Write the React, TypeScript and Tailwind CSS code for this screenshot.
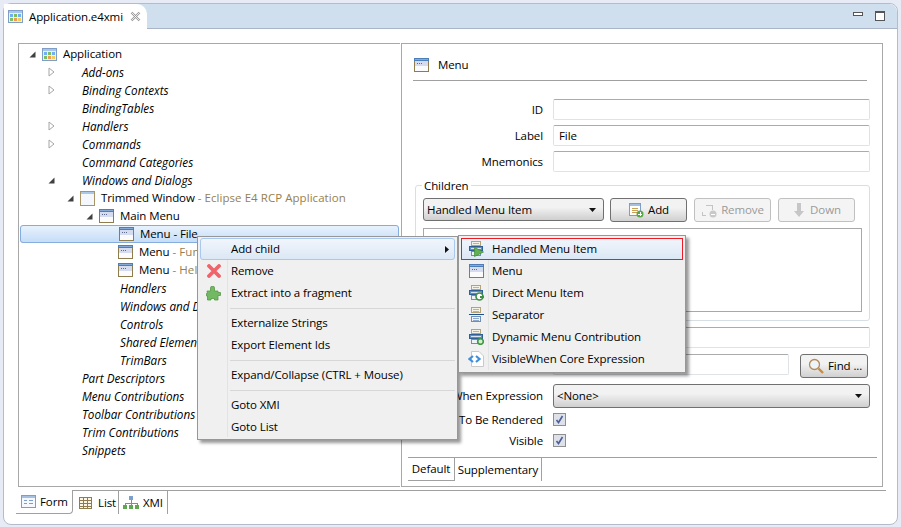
import type { ReactNode } from 'react';

const FONT = "font-['Open_Sans','Liberation_Sans',sans-serif]";

function MenuIcon() {
  return (
    <svg width="15" height="14" viewBox="0 0 15 14" shapeRendering="crispEdges" className="shrink-0">
      <rect x="0" y="0" width="15" height="14" fill="#8f7c4c" />
      <rect x="0" y="0" width="15" height="3" fill="#4f7db8" />
      <rect x="1" y="1" width="13" height="1" fill="#86aad8" />
      <rect x="1" y="3" width="13" height="5" fill="#d5dcf0" />
      <rect x="3" y="5" width="1" height="1" fill="#5c6a8c" />
      <rect x="5" y="5" width="1" height="1" fill="#5c6a8c" />
      <rect x="7" y="5" width="1" height="1" fill="#5c6a8c" />
      <rect x="1" y="8" width="13" height="5" fill="#fbfbfd" />
    </svg>
  );
}

function WindowIcon() {
  return (
    <svg width="15" height="15" viewBox="0 0 15 15" shapeRendering="crispEdges" className="shrink-0">
      <rect x="0" y="0" width="15" height="15" fill="#a99468" />
      <rect x="1" y="1" width="13" height="2" fill="#a9c9e8" />
      <rect x="1" y="3" width="13" height="11" fill="#f4f8fc" />
    </svg>
  );
}

function AppIcon() {
  return (
    <svg width="15" height="13" viewBox="0 0 15 13" shapeRendering="crispEdges" className="shrink-0">
      <rect x="0" y="0" width="15" height="13" fill="#7f9dc6" />
      <rect x="1" y="1" width="13" height="11" fill="#e8f0fa" />
      <rect x="1" y="1" width="13" height="2" fill="#a9c6ea" />
      <rect x="2" y="4" width="3" height="3" fill="#6fb1f0" />
      <rect x="6" y="4" width="3" height="3" fill="#7dbb64" />
      <rect x="10" y="4" width="3" height="3" fill="#6fb1f0" />
      <rect x="2" y="8" width="3" height="3" fill="#7dbb64" />
      <rect x="6" y="8" width="3" height="3" fill="#ee9c55" />
      <rect x="10" y="8" width="3" height="3" fill="#f0cd5e" />
    </svg>
  );
}

function ItemBase({ children }: { children?: ReactNode }) {
  return (
    <svg width="15" height="16" viewBox="0 0 15 16" shapeRendering="crispEdges" className="shrink-0">
      <rect x="2.5" y="0.5" width="9" height="4" fill="#f4f2e6" stroke="#b3a477" />
      <rect x="4" y="2" width="6" height="1" fill="#a8b6c8" />
      <rect x="0.5" y="5.5" width="13" height="4" fill="#5e8fc4" stroke="#2f5f96" />
      <rect x="2" y="7" width="10" height="1" fill="#d7e4f2" />
      <rect x="2.5" y="10.5" width="9" height="4" fill="#eef3fa" stroke="#6e8fb8" />
      {children}
    </svg>
  );
}

function HandledIcon() {
  return (
    <ItemBase>
      <path d="M5.5 6.5 L14.5 11 L5.5 15.5 Z" fill="#63b04f" stroke="#3f8b37" strokeWidth="0.7" shapeRendering="auto" />
    </ItemBase>
  );
}

function DirectIcon() {
  return (
    <ItemBase>
      <circle cx="10.5" cy="11.5" r="3.5" fill="#fff" stroke="#3f8f46" strokeWidth="1.7" shapeRendering="auto" />
      <rect x="10.5" y="10.5" width="4" height="2" fill="#3f8f46" />
    </ItemBase>
  );
}

function DynamicIcon() {
  return (
    <ItemBase>
      <circle cx="11.5" cy="12.5" r="2.8" fill="#d5edc9" stroke="#3f9a46" strokeWidth="1.6" shapeRendering="auto" />
    </ItemBase>
  );
}

function SeparatorIcon() {
  return (
    <svg width="15" height="16" viewBox="0 0 15 16" shapeRendering="crispEdges" className="shrink-0">
      <rect x="2.5" y="0.5" width="9" height="5" fill="#f4f2e6" stroke="#b3a477" />
      <rect x="4" y="2" width="6" height="1" fill="#a8b6c8" />
      <rect x="4" y="4" width="6" height="1" fill="#a8b6c8" />
      <rect x="0" y="7" width="15" height="1" fill="#1f4f8c" />
      <rect x="2.5" y="9.5" width="9" height="5" fill="#eef3fa" stroke="#6e8fb8" />
      <rect x="4" y="11" width="6" height="1" fill="#8fa8c8" />
      <rect x="4" y="13" width="6" height="1" fill="#8fa8c8" />
    </svg>
  );
}

function ExpressionIcon() {
  return (
    <svg width="16" height="16" viewBox="0 0 16 16" className="shrink-0">
      <path d="M3.5 .5 H11 L15.5 5 V15.5 H3.5 Z" fill="#fff" stroke="#c9c9c9" />
      <path d="M5 5 L1.5 8 L5 11" fill="none" stroke="#3f8fdc" strokeWidth="2.2" />
      <path d="M8 5 L11.5 8 L8 11" fill="none" stroke="#3f8fdc" strokeWidth="2.2" />
    </svg>
  );
}

function RemoveIcon() {
  return (
    <svg width="14" height="14" viewBox="0 0 14 14" className="shrink-0">
      <path d="M2 2 L12 12 M12 2 L2 12" stroke="#f0636b" strokeWidth="3.8" strokeLinecap="round" />
    </svg>
  );
}

function PuzzleIcon() {
  return (
    <svg width="15" height="15" viewBox="0 0 15 15" className="shrink-0">
      <path
        d="M1 5 H4.5 V2 A1.8 1.8 0 0 1 8.5 2 V5 H12 V6.5 H14.5 V9.5 H12 V14 H8.5 V12.5 H5 V14 H1.5 V10 H0.5 V7.5 H1.5 Z"
        fill="#73b863"
        stroke="#559a48"
        strokeWidth="0.8"
      />
    </svg>
  );
}

function Arrow({ kind }: { kind?: 'open' | 'closed' }) {
  if (kind === 'open')
    return (
      <svg width="7" height="7" viewBox="0 0 7 7" className="shrink-0">
        <path d="M6.5 .5 V6.5 H.5 Z" fill="#404040" />
      </svg>
    );
  if (kind === 'closed')
    return (
      <svg width="7" height="10" viewBox="0 0 7 10" className="shrink-0">
        <path d="M1 1 L6 5 L1 9 Z" fill="#fff" stroke="#a6a6a6" />
      </svg>
    );
  return null;
}

type TreeRow = {
  label: string;
  suffix?: string;
  indent: string;
  arrow?: 'open' | 'closed';
  icon?: ReactNode;
  italic?: boolean;
  selected?: boolean;
};

const tree: TreeRow[] = [
  { label: 'Application', indent: 'pl-[10px]', arrow: 'open', icon: <AppIcon /> },
  { label: 'Add-ons', indent: 'pl-[29px]', arrow: 'closed', italic: true },
  { label: 'Binding Contexts', indent: 'pl-[29px]', arrow: 'closed', italic: true },
  { label: 'BindingTables', indent: 'pl-[29px]', italic: true },
  { label: 'Handlers', indent: 'pl-[29px]', arrow: 'closed', italic: true },
  { label: 'Commands', indent: 'pl-[29px]', arrow: 'closed', italic: true },
  { label: 'Command Categories', indent: 'pl-[29px]', italic: true },
  { label: 'Windows and Dialogs', indent: 'pl-[29px]', arrow: 'open', italic: true },
  { label: 'Trimmed Window', suffix: ' - Eclipse E4 RCP Application', indent: 'pl-[48px]', arrow: 'open', icon: <WindowIcon /> },
  { label: 'Main Menu', indent: 'pl-[67px]', arrow: 'open', icon: <MenuIcon /> },
  { label: 'Menu - File', indent: 'pl-[86px]', icon: <MenuIcon />, selected: true },
  { label: 'Menu', suffix: ' - Functions', indent: 'pl-[86px]', icon: <MenuIcon /> },
  { label: 'Menu', suffix: ' - Help', indent: 'pl-[86px]', icon: <MenuIcon /> },
  { label: 'Handlers', indent: 'pl-[67px]', italic: true },
  { label: 'Windows and Dialogs', indent: 'pl-[67px]', italic: true },
  { label: 'Controls', indent: 'pl-[67px]', italic: true },
  { label: 'Shared Elements', indent: 'pl-[67px]', italic: true },
  { label: 'TrimBars', indent: 'pl-[67px]', italic: true },
  { label: 'Part Descriptors', indent: 'pl-[29px]', italic: true },
  { label: 'Menu Contributions', indent: 'pl-[29px]', italic: true },
  { label: 'Toolbar Contributions', indent: 'pl-[29px]', italic: true },
  { label: 'Trim Contributions', indent: 'pl-[29px]', italic: true },
  { label: 'Snippets', indent: 'pl-[29px]', italic: true },
];

function Row({ row }: { row: TreeRow }) {
  return (
    <div
      className={`flex h-[18px] items-center whitespace-nowrap ${row.indent} ${
        row.selected ? 'mx-px rounded-[3px] outline outline-1 -outline-offset-1 outline-[#84acdd] bg-gradient-to-b from-[#eaf3fd] to-[#c3dcf7]' : ''
      }`}
    >
      <span className="flex w-[13px] shrink-0 items-center">
        <Arrow kind={row.arrow} />
      </span>
      <span className="flex w-[14px] shrink-0 items-center">{row.icon}</span>
      <span className={`ml-[7px] ${row.italic ? 'text-[11.7px] italic tracking-normal' : ''}`}>
        {row.label}
        {row.suffix && <span className="tracking-[0.05px] text-[#957f50]">{row.suffix}</span>}
      </span>
    </div>
  );
}

function TextField({ value, className = 'flex-1' }: { value?: string; className?: string }) {
  return (
    <div className={`flex h-[21px] items-center rounded-[2px] border border-[#dfe3e8] border-t-[#ababab] pl-[5px] ${className}`}>
      {value}
    </div>
  );
}

function Combo({ value, className }: { value: string; className: string }) {
  return (
    <div className={`flex items-center justify-between rounded-[3px] border border-[#707070] bg-gradient-to-b from-[#f2f2f2] from-40% to-[#cfcfcf] pl-[3px] pr-[7px] ${className}`}>
      <span>{value}</span>
      <svg width="7" height="4" viewBox="0 0 7 4">
        <path d="M0 0 H7 L3.5 4 Z" fill="#111" />
      </svg>
    </div>
  );
}

function ToolButton({ label, icon, disabled, className }: { label: string; icon: ReactNode; disabled?: boolean; className: string }) {
  return (
    <div
      className={`flex h-[24px] items-center justify-center gap-[4px] rounded-[3px] border ${
        disabled
          ? 'border-[#c0c0c0] bg-[#f4f4f4] text-[#9a9a9a]'
          : 'border-[#707070] bg-gradient-to-b from-[#f2f2f2] from-40% to-[#d0d0d0]'
      } ${className}`}
    >
      {icon}
      {label}
    </div>
  );
}

function CheckRow({ label }: { label: string }) {
  return (
    <div className="flex h-[21px] items-center">
      <span className="w-[141px] pr-0 text-right">{label}</span>
      <span className="ml-[10px] flex size-[13px] items-center justify-center border border-[#8e8f8f] bg-[#dee1ea]">
        <svg width="9" height="9" viewBox="0 0 9 9">
          <path d="M1.5 5 L3.5 7.5 L7.5 1" fill="none" stroke="#4a5f97" strokeWidth="1.6" />
        </svg>
      </span>
    </div>
  );
}

type MenuEntry = { label?: string; icon?: ReactNode; hot?: boolean; sub?: boolean };

const contextMenu: MenuEntry[] = [
  { label: 'Add child', hot: true, sub: true },
  { label: 'Remove', icon: <RemoveIcon /> },
  { label: 'Extract into a fragment', icon: <PuzzleIcon /> },
  {},
  { label: 'Externalize Strings' },
  { label: 'Export Element Ids' },
  {},
  { label: 'Expand/Collapse (CTRL + Mouse)' },
  {},
  { label: 'Goto XMI' },
  { label: 'Goto List' },
];

const subMenu: MenuEntry[] = [
  { label: 'Handled Menu Item', icon: <HandledIcon />, hot: true },
  { label: 'Menu', icon: <MenuIcon /> },
  { label: 'Direct Menu Item', icon: <DirectIcon /> },
  { label: 'Separator', icon: <SeparatorIcon /> },
  { label: 'Dynamic Menu Contribution', icon: <DynamicIcon /> },
  { label: 'VisibleWhen Core Expression', icon: <ExpressionIcon /> },
];

export default function App() {
  return (
    <div className={`h-[527px] w-[901px] overflow-hidden bg-[#e6ebf6] pb-[2px] pl-[3px] pr-[3px] pt-[3px] text-[11.5px] leading-[18px] tracking-[-0.1px] text-black ${FONT}`}>
      <div className="relative flex h-full flex-col rounded-[8px] border border-[#b4bccb] bg-white">
        {/* editor tab bar */}
        <div className="flex h-[25px] shrink-0 rounded-t-[8px] bg-[#d0dfee]">
          <div className="flex h-[25px] w-[143px] items-center rounded-tr-[10px] bg-white pl-[4px] pr-[6px]">
            <AppIcon />
            <span className="ml-[6px]">Application.e4xmi</span>
            <svg width="11" height="11" viewBox="0 0 11 11" className="ml-auto">
              <path d="M1.5 1.5 L9.5 9.5 M9.5 1.5 L1.5 9.5" stroke="#9a9a9a" strokeWidth="2.4" />
              <path d="M1.5 1.5 L9.5 9.5 M9.5 1.5 L1.5 9.5" stroke="#fff" strokeWidth="0.8" />
            </svg>
          </div>
          <div className="flex h-[25px] flex-1 items-start justify-end border-b border-[#a9b4c7] pr-[12px] pt-[7px]">
            <span className="mr-[12px] mt-[1px] h-[4px] w-[10px] border border-[#555] bg-white" />
            <span className="h-[10px] w-[10px] border border-[#555] border-t-2 bg-white" />
          </div>
        </div>

        {/* master / detail */}
        <div className="flex h-[458px] shrink-0 pl-[14px] pr-[14px] pt-[14px]">
          <div className="h-[444px] w-[382px] border border-r-0 border-[#a8a8a8] pt-px">
            {tree.map((row, i) => (
              <Row key={i} row={row} />
            ))}
          </div>
          <div className="ml-[1px] h-[444px] flex-1 border border-[#a8a8a8]">
            <div className="ml-[11px] mr-[15px] flex h-[37px] items-center border-b border-[#a0a0a0] pl-px pt-[5px]">
              <MenuIcon />
              <span className="ml-[9px]">Menu</span>
            </div>
            <div className="mt-[18px] flex flex-col gap-[5px] pr-[12px]">
              {['ID', 'Label', 'Mnemonics'].map((name) => (
                <div key={name} className="flex items-center">
                  <span className="w-[141px] text-right">{name}</span>
                  <TextField className="ml-[10px] flex-1" value={name === 'Label' ? 'File' : undefined} />
                </div>
              ))}
            </div>
            <div className="relative ml-[13px] mr-[12px] mt-[13px] h-[136px] rounded-[3px] border border-[#d5dfe5] pl-[7px] pt-[12px]">
              <span className="absolute -top-[9px] left-[6px] bg-white px-[2px]">Children</span>
              <div className="flex items-start">
                <Combo value="Handled Menu Item" className="h-[23px] w-[181px]" />
                <ToolButton
                  className="ml-[6px] w-[77px]"
                  label="Add"
                  icon={
                    <svg width="16" height="16" viewBox="0 0 16 16" shapeRendering="crispEdges">
                      <rect x="1.5" y="1.5" width="11" height="12" fill="#fff" stroke="#7f9dc6" />
                      <rect x="2" y="2" width="10" height="2" fill="#a7c0e2" />
                      <path d="M4 6 H10 M4 8 H10 M4 10 H10" stroke="#c9a15a" />
                      <circle cx="12" cy="12" r="3.5" fill="#5aa845" shapeRendering="auto" />
                      <path d="M10 12 H14 M12 10 V14" stroke="#fff" />
                    </svg>
                  }
                />
                <ToolButton
                  disabled
                  className="ml-[7px] w-[77px]"
                  label="Remove"
                  icon={
                    <svg width="16" height="16" viewBox="0 0 16 16" shapeRendering="crispEdges">
                      <path d="M4.5 13.5 H1.5 V10 M4.5 3.5 H11.5 V8" fill="none" stroke="#c4c4c4" />
                      <circle cx="12" cy="12" r="3.5" fill="#c9c9c9" shapeRendering="auto" />
                      <path d="M10 12 H14" stroke="#fff" />
                    </svg>
                  }
                />
                <ToolButton
                  disabled
                  className="ml-[7px] w-[77px]"
                  label="Down"
                  icon={
                    <svg width="14" height="16" viewBox="0 0 14 16">
                      <path d="M5 1 H9 V9 H12 L7 15 L2 9 H5 Z" fill="#c6c6c6" />
                    </svg>
                  }
                />
              </div>
              <div className="mt-[6px] h-[84px] w-[439px] border border-[#a8a8a8]" />
            </div>
            <div className="ml-[151px] mr-[12px] mt-[6px]">
              <TextField />
            </div>
            <div className="ml-[151px] mr-[14px] mt-[6px] flex items-start">
              <TextField className="w-[236px]" />
              <ToolButton
                className="ml-[11px] w-[68px] !justify-start pl-[7px]"
                label="Find ..."
                icon={
                  <svg width="16" height="16" viewBox="0 0 16 16">
                    <circle cx="6.5" cy="6.5" r="5" fill="#eef4fb" stroke="#b48a55" strokeWidth="1.3" />
                    <path d="M10.5 10.5 L15 15" stroke="#c98b3d" strokeWidth="2.4" />
                  </svg>
                }
              />
            </div>
            <div className="mr-[12px] mt-[6px] flex items-center">
              <span className="w-[141px] whitespace-nowrap text-right">Visible-When Expression</span>
              <Combo value="<None>" className="ml-[10px] h-[24px] flex-1" />
            </div>
            <div className="mt-[1px]">
              <CheckRow label="To Be Rendered" />
            </div>
            <CheckRow label="Visible" />
            <div className="ml-[6px] mr-[5px] mt-[6px] flex h-[24px] border-t border-[#a0a0a0]">
              <div className="flex h-[23px] w-[46px] items-center justify-center border-b border-[#a0a0a0]">Default</div>
              <div className="flex h-[23px] w-[88px] items-center justify-center border-l border-r border-[#a0a0a0]">Supplementary</div>
            </div>
          </div>
        </div>

        {/* model editor tabs */}
        <div className="mt-[3px] flex h-[24px] pl-[12px] pr-[11px]">
          <div className="flex h-[24px] w-[57px] items-center rounded-br-[4px] border-b border-r border-[#a0a0a0] pl-[5px]">
            <svg width="15" height="13" viewBox="0 0 15 13" shapeRendering="crispEdges">
              <rect x=".5" y=".5" width="14" height="12" fill="#f5f8fd" stroke="#7f9dc6" />
              <rect x="1" y="1" width="13" height="2" fill="#a7c0e2" />
              <path d="M3 5 H6 M3 8 H6 M8 5 H12 M8 8 H12" stroke="#7f9dc6" />
            </svg>
            <span className="ml-[4px]">Form</span>
          </div>
          <div className="flex flex-1 border-t border-[#a0a0a0]">
            <div className="flex h-[23px] w-[46px] items-center border-r border-[#a0a0a0] pl-[6px]">
              <svg width="13" height="12" viewBox="0 0 13 12" shapeRendering="crispEdges">
                <rect x=".5" y=".5" width="12" height="11" fill="#fbf6e6" stroke="#8f7c4c" />
                <path d="M1 3.5 H12 M1 6.5 H12 M1 9 H12 M4.5 1 V11 M8.5 1 V11" stroke="#8f7c4c" />
              </svg>
              <span className="ml-[6px]">List</span>
            </div>
            <div className="flex h-[23px] w-[49px] items-center border-r border-[#a0a0a0] pl-[4px]">
              <svg width="16" height="14" viewBox="0 0 16 14" shapeRendering="crispEdges">
                <rect x="6" y="0" width="4" height="4" fill="#7c9fd0" />
                <path d="M8 4 V7 M2 7 H14 M2 7 V9 M8 7 V9 M14 7 V9" stroke="#8a8a8a" />
                <rect x="0" y="9" width="4" height="4" fill="#5fa84d" />
                <rect x="6" y="9" width="4" height="4" fill="#5fa84d" />
                <rect x="12" y="9" width="4" height="4" fill="#5fa84d" />
              </svg>
              <span className="ml-[4px]">XMI</span>
            </div>
          </div>
        </div>

        {/* context menu */}
        <div className="absolute left-[193px] top-[232px] w-[261px] border border-[#979797] bg-[#f0f0f0] px-[2px] pb-[1px] pt-[1px] shadow-[3px_3px_3px_rgba(0,0,0,0.4)]">
          <div className="absolute bottom-[2px] left-[29px] top-[2px] w-px bg-[#e2e3e3]" />
          {contextMenu.map((entry, i) =>
            entry.label ? (
              <div
                key={i}
                className={`relative flex h-[22px] items-center ${
                  entry.hot ? 'rounded-[3px] outline outline-1 -outline-offset-1 outline-[#a8c8ee] bg-gradient-to-b from-[#f2f6fc] to-[#dbe7f5]' : ''
                }`}
              >
                <span className="flex w-[31px] shrink-0 justify-center pl-[1px] pr-[5px]">{entry.icon}</span>
                {entry.label}
                {entry.sub && (
                  <svg width="4" height="7" viewBox="0 0 4 7" className="absolute right-[6px] top-[8px]">
                    <path d="M0 0 L4 3.5 L0 7 Z" fill="#111" />
                  </svg>
                )}
              </div>
            ) : (
              <div key={i} className="ml-[30px] flex h-[8px] items-center">
                <span className="h-px w-full bg-[#d7d7d7]" />
              </div>
            ),
          )}
        </div>

        {/* add child submenu */}
        <div className="absolute left-[454px] top-[231px] w-[228px] border border-[#979797] bg-[#f0f0f0] p-[2px] shadow-[3px_3px_3px_rgba(0,0,0,0.4)]">
          <div className="absolute bottom-[2px] left-[29px] top-[2px] w-px bg-[#e2e3e3]" />
          {subMenu.map((entry, i) => (
            <div
              key={i}
              className={`relative flex h-[22px] items-center ${
                entry.hot ? 'outline outline-1 -outline-offset-1 outline-[#ed1c24] bg-gradient-to-b from-[#f2f6fc] to-[#dbe7f5]' : ''
              }`}
            >
              <span className="flex w-[31px] shrink-0 justify-center pr-[1px]">{entry.icon}</span>
              {entry.label}
            </div>
          ))}
        </div>
      </div>
    </div>
  );
}
